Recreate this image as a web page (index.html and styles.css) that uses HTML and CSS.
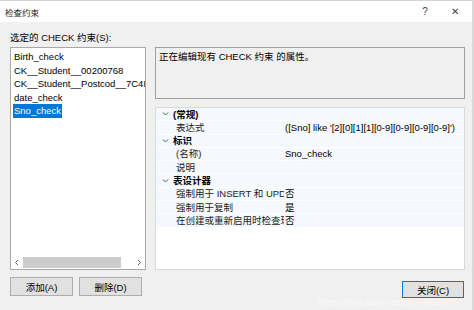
FILE: index.html
```html
<!DOCTYPE html>
<html lang="zh-CN">
<head>
    <meta charset="UTF-8">
    <title>检查约束</title>
    <link rel="stylesheet" href="styles.css">
</head>
<body>

<div class="window">
    <!-- Title bar -->
    <div class="titlebar">
        <span class="title">检查约束</span>
        <span class="tb-btn">?</span>
        <span class="tb-btn close-x">&#x2715;</span>
    </div>

    <div class="content">
        <!-- Left: constraint list -->
        <div class="left">
            <div class="label">选定的 CHECK 约束(S):</div>
            <div class="listbox">
                <div class="items">
                    <div class="item">Birth_check</div>
                    <div class="item">CK__Student__00200768</div>
                    <div class="item">CK__Student__Postcod__7C4F7684</div>
                    <div class="item">date_check</div>
                    <div class="item"><span class="selected">Sno_check</span></div>
                </div>
                <div class="hscroll">
                    <svg class="arrow" width="12" height="11" viewBox="0 0 12 11"><path d="M7 3 L4.5 5.5 L7 8" fill="none" stroke="#606060" stroke-width="1"/></svg>
                    <div class="track"><div class="thumb"></div></div>
                    <svg class="arrow" width="12" height="11" viewBox="0 0 12 11"><path d="M5 3 L7.5 5.5 L5 8" fill="none" stroke="#606060" stroke-width="1"/></svg>
                </div>
            </div>
            <div class="btn-row">
                <button class="btn">添加(A)</button>
                <button class="btn">删除(D)</button>
            </div>
        </div>

        <!-- Right: properties -->
        <div class="right">
            <div class="desc">正在编辑现有 CHECK 约束 的属性。</div>
            <div class="grid">
                <div class="row cat"><svg class="chev" width="12" height="8" viewBox="0 0 12 8"><path d="M2 2.5 L4.5 5 L7 2.5" fill="none" stroke="#555" stroke-width="1"/></svg>(常规)</div>
                <div class="row"><span class="name">表达式</span><span class="val">([Sno] like '[2][0][1][1][0-9][0-9][0-9][0-9]')</span></div>
                <div class="row cat"><svg class="chev" width="12" height="8" viewBox="0 0 12 8"><path d="M2 2.5 L4.5 5 L7 2.5" fill="none" stroke="#555" stroke-width="1"/></svg>标识</div>
                <div class="row"><span class="name">(名称)</span><span class="val">Sno_check</span></div>
                <div class="row"><span class="name">说明</span><span class="val"></span></div>
                <div class="row cat"><svg class="chev" width="12" height="8" viewBox="0 0 12 8"><path d="M2 2.5 L4.5 5 L7 2.5" fill="none" stroke="#555" stroke-width="1"/></svg>表设计器</div>
                <div class="row"><span class="name">强制用于 INSERT 和 UPDATE</span><span class="val">否</span></div>
                <div class="row"><span class="name">强制用于复制</span><span class="val">是</span></div>
                <div class="row"><span class="name">在创建或重新启用时检查现有数据</span><span class="val">否</span></div>
            </div>
            <div class="btn-row end">
                <button class="btn default">关闭(C)</button>
            </div>
        </div>
    </div>
    <div class="watermark">https://blog.csdn.net/qq_43658387</div>
</div>

</body>
</html>
```

FILE: styles.css
```css
body {
    margin: 0;
    padding: 0;
    font-family: "Liberation Sans", "Noto Sans CJK SC", sans-serif;
    font-size: 9.5px;
    color: #000;
    background-color: #f0f0f0;
}
.window {
    width: 474px;
    height: 310px;
    background-color: #f0f0f0;
    box-sizing: border-box;
    border-top: 1px solid #d4d4d4;
    border-right: 2px solid #d8d8d8;
    overflow: hidden;
    position: relative;
}
.titlebar {
    height: 21px;
    background-color: #fff;
    display: flex;
    align-items: center;
    padding-left: 5px;
}
.title {
    flex: 1;
    font-size: 8.5px;
    color: #222;
}
.tb-btn {
    width: 30px;
    text-align: center;
    color: #444;
    font-size: 10px;
}
.close-x {
    margin-right: 2px;
}
.content {
    display: flex;
    padding: 9px 0 0 10px;
}
.left {
    width: 136px;
    display: flex;
    flex-direction: column;
}
.label {
    height: 16px;
    line-height: 14px;
}
.listbox {
    height: 223px;
    background-color: #fff;
    border: 1px solid #a9a9a9;
    box-sizing: border-box;
    display: flex;
    flex-direction: column;
    overflow: hidden;
}
.items {
    flex: 1;
    padding: 2px 0 0 3px;
    white-space: nowrap;
}
.item {
    height: 13.5px;
    line-height: 13.5px;
}
.selected {
    display: inline-block;
    background-color: #0078d7;
    color: #fff;
    line-height: 14px;
    padding: 0 1px;
    margin-left: -1px;
}
.hscroll {
    height: 11px;
    display: flex;
    align-items: center;
    margin-bottom: 1px;
}
.arrow {
    flex: none;
}
.track {
    flex: 1;
    height: 11px;
}
.thumb {
    width: 98px;
    height: 11px;
    background-color: #cdcdcd;
}
.btn-row {
    display: flex;
    gap: 6px;
    margin-top: 7px;
}
.btn {
    width: 63px;
    height: 19px;
    padding: 0;
    background-color: #e1e1e1;
    border: 1px solid #adadad;
    font-family: inherit;
    font-size: 9.5px;
    color: #000;
}
.right {
    width: 310px;
    margin-left: 9px;
    margin-top: 16px;
    display: flex;
    flex-direction: column;
}
.desc {
    height: 52px;
    box-sizing: border-box;
    border: 1px solid #a0a0a0;
    padding: 2px 3px;
    line-height: 14px;
}
.grid {
    height: 163px;
    margin-top: 8px;
    box-sizing: border-box;
    border: 1px solid #d9d9d9;
    background-color: #fff;
}
.row {
    height: 13.3px;
    line-height: 13.3px;
    display: flex;
    align-items: center;
    background-color: #f5f8fc;
    border-bottom: 1px solid #fff;
    box-sizing: border-box;
    white-space: nowrap;
}
.cat {
    font-weight: bold;
    padding-left: 5px;
}
.chev {
    flex: none;
}
.name {
    flex: none;
    width: 128px;
    box-sizing: border-box;
    padding-left: 20px;
    padding-right: 1px;
    overflow: hidden;
    color: #222;
}
.val {
    flex: 1;
    padding-left: 1px;
    overflow: hidden;
}
.btn-row.end {
    justify-content: flex-end;
    margin-top: 11px;
    padding-right: 1px;
}
.btn.default {
    width: 62px;
    height: 17px;
    border-color: #0078d7;
}
.watermark {
    position: absolute;
    right: 16px;
    bottom: 3px;
    font-size: 9px;
    color: rgba(255, 255, 255, 0.6);
}
```
